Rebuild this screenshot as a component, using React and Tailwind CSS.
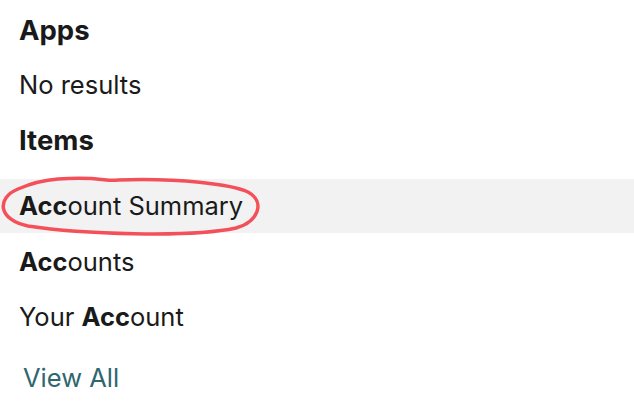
import React from 'react';

const Match = ({ children }) => <span className="font-bold">{children}</span>;

export default function App() {
  return (
    <div
      className="relative h-[410px] w-[634px] overflow-hidden bg-white text-[25.5px] text-[#1a1a1a]"
      style={{ fontFamily: 'Inter, "Noto Sans", sans-serif' }}
    >
      <div className="flex flex-col pt-[3px]">
        <div className="flex h-[55px] items-center px-[19px] text-[27.5px] font-bold">Apps</div>
        <div className="flex h-[55px] items-center px-[19px]">No results</div>
        <div className="flex h-[55px] items-center px-[19px] text-[27.5px] font-bold">Items</div>
        <div className="mt-[11px] flex h-[54px] items-center bg-[#f2f2f2] px-[19px]">
          <span>
            <Match>Acc</Match>ount Summary
          </span>
        </div>
        <div className="mt-[2px] flex h-[55px] items-center px-[19px]">
          <span>
            <Match>Acc</Match>ounts
          </span>
        </div>
        <div className="flex h-[55px] items-center px-[19px]">
          <span>
            Your <Match>Acc</Match>ount
          </span>
        </div>
        <div className="mt-[6px] flex h-[55px] items-center px-[23px] text-[#2f6670]">View All</div>
      </div>

      {/* hand-drawn annotation round the highlighted row */}
      <svg className="pointer-events-none absolute left-0 top-0" width="634" height="410" viewBox="0 0 634 410">
        <path
          d="M58 179 C100 176 106 182 118 180 C180 178 230 184 248 192 C266 202 258 222 236 228 C190 238 80 234 28 226 C-2 220 -4 198 18 189 C32 183 44 180 58 179"
          fill="none"
          stroke="#f4505a"
          strokeWidth="3.5"
          strokeLinecap="round"
        />
      </svg>
    </div>
  );
}
